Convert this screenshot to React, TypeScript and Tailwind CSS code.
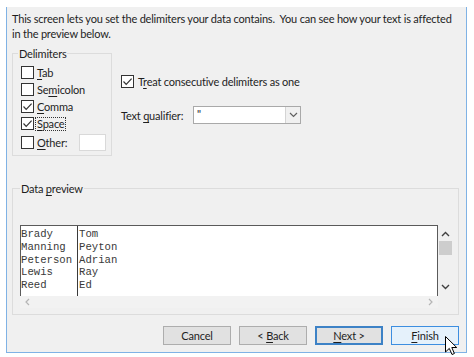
import React from "react";

type CheckProps = {
  checked?: boolean;
};

const Check = ({ checked }: CheckProps) => (
  <span className="w-[13px] h-[13px] border border-[#333333] bg-white flex items-center justify-center shrink-0">
    {checked && (
      <svg width="11" height="11" viewBox="0 0 11 11" fill="none">
        <path d="M1.5 5.5 L4.2 8.3 L9.6 2.6" stroke="#333333" strokeWidth="1.2" />
      </svg>
    )}
  </span>
);

const Key = ({ children }: { children: React.ReactNode }) => (
  <span className="underline underline-offset-2">{children}</span>
);

const rows = [
  ["Brady", "Tom"],
  ["Manning", "Peyton"],
  ["Peterson", "Adrian"],
  ["Lewis", "Ray"],
  ["Reed", "Ed"],
];

export default function App() {
  return (
    <div className="w-[474px] h-[357px] bg-white overflow-hidden relative text-[11px] leading-[15px] tracking-[-0.2px] text-[#1e1e1e] font-['Lato','Noto_Sans',sans-serif]">
      <div className="h-[7px]" />
      <div className="ml-[6px] w-[461px] h-[346px] border-x border-b border-[#7fb2e5] bg-[#f0f0f0] px-[5px] pt-[4px]">
        <p>
          This screen lets you set the delimiters your data contains.&nbsp; You can see how your text is affected in the preview below.
        </p>

        <div className="flex mt-[5px]">
          <fieldset className="w-[100px] h-[110px] border border-[#dcdcdc] pl-[5px]">
            <legend className="px-[1px]">Delimiters</legend>
            <div className="flex flex-col pl-[3px] mt-[3px]">
              <label className="h-[17px] flex items-center">
                <Check />
                <span className="ml-[3px]"><Key>T</Key>ab</span>
              </label>
              <label className="h-[17px] flex items-center">
                <Check />
                <span className="ml-[3px]">Se<Key>m</Key>icolon</span>
              </label>
              <label className="h-[17px] flex items-center">
                <Check checked />
                <span className="ml-[3px]"><Key>C</Key>omma</span>
              </label>
              <label className="h-[17px] flex items-center">
                <Check checked />
                <span className="ml-[1px] px-[1px] border border-dotted border-[#333333] leading-[12px]"><Key>S</Key>pace</span>
              </label>
              <label className="h-[20px] flex items-center">
                <Check />
                <span className="ml-[3px]"><Key>O</Key>ther:</span>
                <span className="ml-[12px] w-[27px] h-[17px] bg-white border border-[#d9d9d9]" />
              </label>
            </div>
          </fieldset>

          <div className="ml-[9px] pt-[28px] flex flex-col">
            <label className="h-[15px] flex items-center">
              <Check checked />
              <span className="ml-[4px]">T<Key>r</Key>eat consecutive delimiters as one</span>
            </label>
            <div className="flex items-center mt-[17px]">
              <span className="w-[72px]">Text <Key>q</Key>ualifier:</span>
              <div className="w-[108px] h-[18px] bg-white border border-[#a9a9a9] flex">
                <span className="flex-1 pl-[3px] leading-[14px]">"</span>
                <span className="w-[15px] border-l border-[#d4d4d4] bg-[#f0f0f0] flex items-center justify-center">
                  <svg width="9" height="6" viewBox="0 0 9 6" fill="none">
                    <path d="M1 1 L4.5 4.5 L8 1" stroke="#606060" strokeWidth="1.2" />
                  </svg>
                </span>
              </div>
            </div>
          </div>
        </div>

        <fieldset className="mt-[25px] w-[447px] border border-[#dcdcdc] pl-[7px] pb-[6px]">
          <legend className="px-[1px]">Data <Key>p</Key>review</legend>
          <div className="mt-[29px] flex flex-col w-[433px]">
            <div className="flex h-[71px]">
              <div className="w-[418px] bg-white border-x border-t border-[#5a5a5a] flex overflow-hidden pt-[2px] font-['Liberation_Mono',monospace] text-[10.67px] leading-[12.8px] tracking-normal text-[#3a3a3a]">
                <div className="w-[57px] border-r border-[#3a3a3a] -mt-[2px] pt-[2px]">
                  {rows.map((r) => (
                    <div key={r[0]}>{r[0]}</div>
                  ))}
                </div>
                <div className="pl-[1px]">
                  {rows.map((r) => (
                    <div key={r[1]}>{r[1]}</div>
                  ))}
                </div>
              </div>
              <div className="w-[15px] flex flex-col items-center bg-[#f0f0f0]">
                <svg className="mt-[6px]" width="9" height="6" viewBox="0 0 9 6" fill="none">
                  <path d="M1 5 L4.5 1.5 L8 5" stroke="#404040" strokeWidth="1.4" />
                </svg>
                <span className="mt-[4px] w-[13px] h-[14px] bg-[#cdcdcd]" />
                <svg className="mt-auto mb-[6px]" width="9" height="6" viewBox="0 0 9 6" fill="none">
                  <path d="M1 1 L4.5 4.5 L8 1" stroke="#404040" strokeWidth="1.4" />
                </svg>
              </div>
            </div>
            <div className="w-[418px] h-[12px] bg-[#f2f2f2] flex items-center justify-between px-[5px]">
              <svg width="5" height="8" viewBox="0 0 5 8" fill="none">
                <path d="M4 1 L1 4 L4 7" stroke="#b5b5b5" strokeWidth="1.2" />
              </svg>
              <svg width="5" height="8" viewBox="0 0 5 8" fill="none">
                <path d="M1 1 L4 4 L1 7" stroke="#b5b5b5" strokeWidth="1.2" />
              </svg>
            </div>
          </div>
        </fieldset>

        <div className="mt-[11px] flex justify-end gap-[8px] pr-[2px]">
          <button className="w-[68px] h-[19px] bg-[#e1e1e1] border border-[#adadad] leading-[15px]">Cancel</button>
          <button className="w-[68px] h-[19px] bg-[#e1e1e1] border border-[#adadad] leading-[15px]">&lt; <Key>B</Key>ack</button>
          <button className="w-[68px] h-[19px] bg-[#e1e1e1] border-2 border-[#3d82c6] leading-[13px]"><Key>N</Key>ext &gt;</button>
          <button className="w-[68px] h-[19px] bg-[#e5f1fb] border border-[#3d8ee0] leading-[15px]"><Key>F</Key>inish</button>
        </div>
      </div>

      <svg className="absolute left-[445px] top-[336px]" width="13" height="20" viewBox="0 0 13 20" fill="none">
        <path d="M0.5 0.5 L0.5 16 L4.3 12.4 L7 18.5 L9.4 17.5 L6.8 11.5 L11.7 11.5 Z" fill="white" stroke="black" strokeWidth="1" strokeLinejoin="round" />
      </svg>
    </div>
  );
}
